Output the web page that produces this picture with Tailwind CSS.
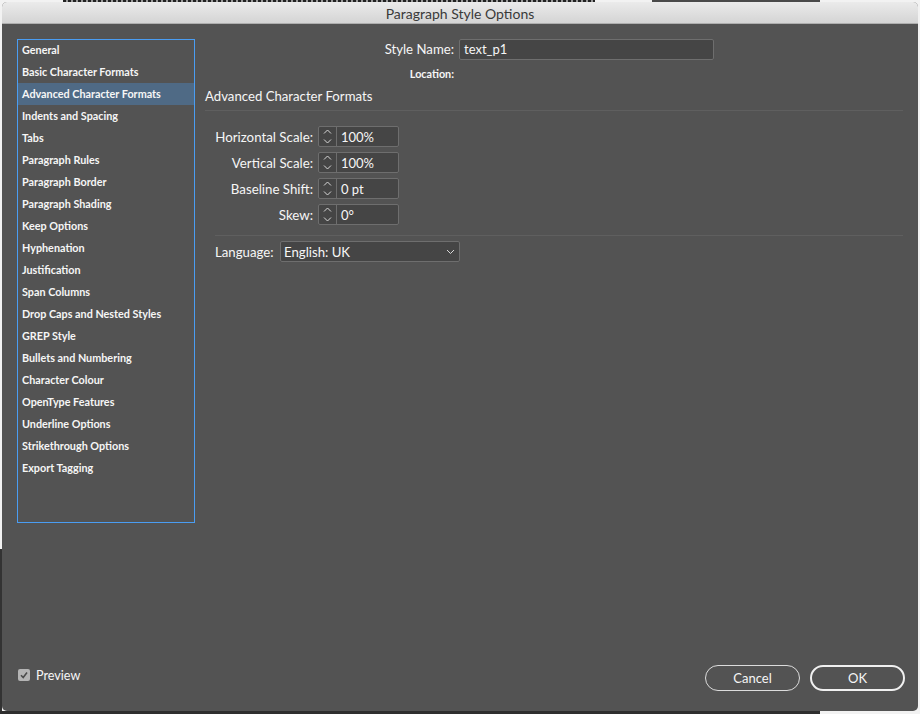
<!DOCTYPE html>
<html lang="en">
  <head>
    <meta charset="UTF-8" />
    <meta name="viewport" content="width=device-width, initial-scale=1.0" />
    <script src="https://cdn.jsdelivr.net/npm/@tailwindcss/browser@4"></script>
    <title>Paragraph Style Options</title>
  </head>
  <body class="bg-white font-['Lato','Liberation_Sans',sans-serif] text-[#f6f6f6]">
    <div class="relative w-[920px] h-[714px] overflow-hidden bg-[#f2f2f2]">
      <!-- what shows behind the dialog -->
      <div class="absolute left-[63px] top-0 w-[532px] h-[2px] bg-[repeating-linear-gradient(90deg,#222_0,#222_3px,#999_3px,#999_5px)]"></div>
      <div class="absolute left-[652px] top-0 w-[168px] h-[2px] bg-[#4a4a4a]"></div>
      <div class="absolute left-0 top-[549px] w-[2px] h-[165px] bg-[#333]"></div>
      <div class="absolute left-0 bottom-0 w-[820px] h-[3px] bg-[#2e2e2e]"></div>

      <div class="absolute left-[2px] top-[2px] w-[916px] h-[709px] rounded-[5px] bg-[#535353] flex flex-col overflow-hidden">
        <div class="h-[22px] shrink-0 pt-[1px] bg-gradient-to-b from-[#ebebeb] to-[#d4d4d4] border-b border-[#aeaeae] flex items-center justify-center text-[14px] text-[#3a3a3a]">
          Paragraph Style Options
        </div>

        <div class="flex flex-1 min-h-0">
          <nav class="ml-[15px] mt-[15px] w-[178px] h-[484px] shrink-0 border border-[#4a9df2] text-[10.8px] font-bold">
            <ul class="-mt-px">
              <li class="h-[22px] px-[4px] flex items-center">General</li>
              <li class="h-[22px] px-[4px] flex items-center">Basic Character Formats</li>
              <li class="h-[22px] px-[4px] flex items-center bg-[#4f6a85]">Advanced Character Formats</li>
              <li class="h-[22px] px-[4px] flex items-center">Indents and Spacing</li>
              <li class="h-[22px] px-[4px] flex items-center">Tabs</li>
              <li class="h-[22px] px-[4px] flex items-center">Paragraph Rules</li>
              <li class="h-[22px] px-[4px] flex items-center">Paragraph Border</li>
              <li class="h-[22px] px-[4px] flex items-center">Paragraph Shading</li>
              <li class="h-[22px] px-[4px] flex items-center">Keep Options</li>
              <li class="h-[22px] px-[4px] flex items-center">Hyphenation</li>
              <li class="h-[22px] px-[4px] flex items-center">Justification</li>
              <li class="h-[22px] px-[4px] flex items-center">Span Columns</li>
              <li class="h-[22px] px-[4px] flex items-center">Drop Caps and Nested Styles</li>
              <li class="h-[22px] px-[4px] flex items-center">GREP Style</li>
              <li class="h-[22px] px-[4px] flex items-center">Bullets and Numbering</li>
              <li class="h-[22px] px-[4px] flex items-center">Character Colour</li>
              <li class="h-[22px] px-[4px] flex items-center">OpenType Features</li>
              <li class="h-[22px] px-[4px] flex items-center">Underline Options</li>
              <li class="h-[22px] px-[4px] flex items-center">Strikethrough Options</li>
              <li class="h-[22px] px-[4px] flex items-center">Export Tagging</li>
            </ul>
          </nav>

          <main class="ml-[10px] mr-[15px] flex-1 min-w-0 pt-[15px]">
            <div class="flex items-center h-[21px] text-[13.2px]">
              <label class="w-[249px] text-right pt-px">Style Name:</label>
              <div class="ml-[5px] w-[255px] h-[21px] rounded-[2px] bg-[#454545] border border-[#6e6e6e] px-[4px] flex items-center text-[13px]">text_p1</div>
            </div>
            <div class="flex items-center h-[14px] mt-[7px] text-[10.8px] font-bold">
              <label class="w-[249px] text-right">Location:</label>
            </div>
            <h2 class="mt-[7px] h-[18px] flex items-center text-[13.2px]">Advanced Character Formats</h2>
            <div class="mt-[4px] h-px bg-[#5f5f5f]"></div>

            <div class="mt-[15px] pl-[10px] flex flex-col gap-[5px] text-[13.3px]">
              <div class="flex items-center h-[21px]">
                <label class="w-[98px] text-right pt-[2px] whitespace-nowrap">Horizontal Scale:</label>
                <div class="ml-[5px] w-[81px] h-[21px] rounded-[2px] bg-[#454545] border border-[#6e6e6e] flex items-center">
                  <div class="w-[18px] h-full border-r border-[#6e6e6e] flex items-center justify-center shrink-0">
                    <svg width="11" height="17" viewBox="0 0 11 17" fill="none" stroke="#d8d8d8" stroke-width="1"><path d="M2 5.5 5.5 2 9 5.5M2 11.5 5.5 15 9 11.5"/></svg>
                  </div>
                  <span class="pl-[4px] pt-[2px] text-[13px]">100%</span>
                </div>
              </div>
              <div class="flex items-center h-[21px]">
                <label class="w-[98px] text-right pt-[2px] whitespace-nowrap">Vertical Scale:</label>
                <div class="ml-[5px] w-[81px] h-[21px] rounded-[2px] bg-[#454545] border border-[#6e6e6e] flex items-center">
                  <div class="w-[18px] h-full border-r border-[#6e6e6e] flex items-center justify-center shrink-0">
                    <svg width="11" height="17" viewBox="0 0 11 17" fill="none" stroke="#d8d8d8" stroke-width="1"><path d="M2 5.5 5.5 2 9 5.5M2 11.5 5.5 15 9 11.5"/></svg>
                  </div>
                  <span class="pl-[4px] pt-[2px] text-[13px]">100%</span>
                </div>
              </div>
              <div class="flex items-center h-[21px]">
                <label class="w-[98px] text-right pt-[2px] whitespace-nowrap">Baseline Shift:</label>
                <div class="ml-[5px] w-[81px] h-[21px] rounded-[2px] bg-[#454545] border border-[#6e6e6e] flex items-center">
                  <div class="w-[18px] h-full border-r border-[#6e6e6e] flex items-center justify-center shrink-0">
                    <svg width="11" height="17" viewBox="0 0 11 17" fill="none" stroke="#d8d8d8" stroke-width="1"><path d="M2 5.5 5.5 2 9 5.5M2 11.5 5.5 15 9 11.5"/></svg>
                  </div>
                  <span class="pl-[4px] pt-[2px] text-[13px]">0 pt</span>
                </div>
              </div>
              <div class="flex items-center h-[21px]">
                <label class="w-[98px] text-right pt-[2px] whitespace-nowrap">Skew:</label>
                <div class="ml-[5px] w-[81px] h-[21px] rounded-[2px] bg-[#454545] border border-[#6e6e6e] flex items-center">
                  <div class="w-[18px] h-full border-r border-[#6e6e6e] flex items-center justify-center shrink-0">
                    <svg width="11" height="17" viewBox="0 0 11 17" fill="none" stroke="#d8d8d8" stroke-width="1"><path d="M2 5.5 5.5 2 9 5.5M2 11.5 5.5 15 9 11.5"/></svg>
                  </div>
                  <span class="pl-[4px] pt-[2px] text-[13px]">0°</span>
                </div>
              </div>
            </div>

            <div class="mt-[10px] ml-[10px] h-px bg-[#5f5f5f]"></div>
            <div class="mt-[5px] pl-[10px] flex items-center text-[13.2px]">
              <label class="w-[60px] pt-[2px]">Language:</label>
              <div class="ml-[5px] w-[180px] h-[21px] rounded-[2px] bg-[#454545] border border-[#6e6e6e] pl-[3px] pr-[3px] flex items-center justify-between">
                <span class="pt-[2px]">English: UK</span>
                <svg width="11" height="8" viewBox="0 0 11 8" fill="none" stroke="#d8d8d8" stroke-width="1"><path d="M2 2 5.5 5.5 9 2"/></svg>
              </div>
            </div>
          </main>
        </div>

        <div class="h-[47px] shrink-0 flex items-start pl-[16px] pr-[13px]">
          <div class="mt-[5px] h-[12px] flex items-center text-[12.6px]">
            <div class="w-[12px] h-[12px] rounded-[2px] bg-[#b4b4b4] flex items-center justify-center">
              <svg width="10" height="10" viewBox="0 0 10 10" fill="none" stroke="#4c4c4c" stroke-width="1.6"><path d="M2 5.2 4.2 7.5 8 2.5"/></svg>
            </div>
            <span class="ml-[6px] pt-[2px]">Preview</span>
          </div>
          <button class="ml-auto mt-[1px] w-[95px] h-[26px] pt-[2px] rounded-full border border-[#dcdcdc] text-[13px]">Cancel</button>
          <button class="ml-[10px] mt-[1px] w-[95px] h-[26px] pt-[2px] rounded-full border-2 border-[#f0f0f0] text-[13px]">OK</button>
        </div>
      </div>
    </div>
  </body>
</html>
